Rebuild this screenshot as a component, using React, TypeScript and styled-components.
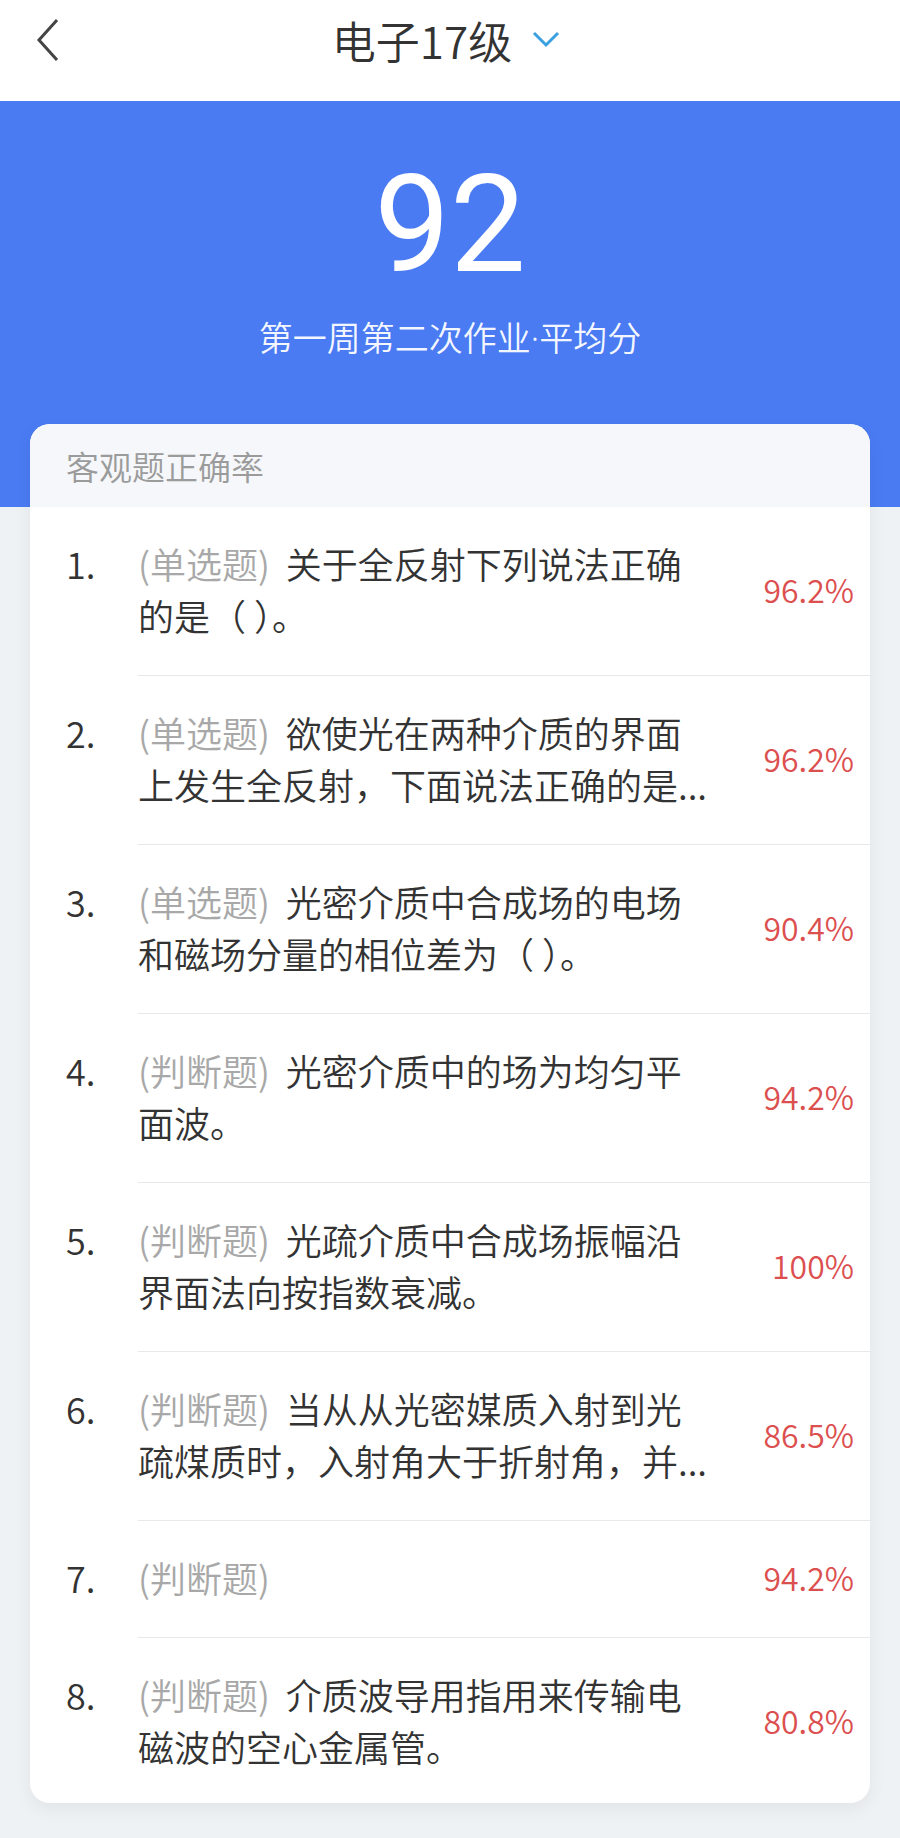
import React from 'react';
import styled, { createGlobalStyle } from 'styled-components';

const GlobalStyle = createGlobalStyle`
  html, body {
    margin: 0;
    padding: 0;
    background-color: #eef2f5;
    font-family: "Noto Sans CJK SC", "Noto Sans", sans-serif;
  }
  * {
    box-sizing: border-box;
  }
`;

interface Question {
  no: number;
  type: string;
  text: string;
  rate: string;
}

// 客观题列表
const questions: Question[] = [
  { no: 1, type: '单选题', text: '关于全反射下列说法正确的是（ ）。', rate: '96.2%' },
  { no: 2, type: '单选题', text: '欲使光在两种介质的界面上发生全反射，下面说法正确的是...', rate: '96.2%' },
  { no: 3, type: '单选题', text: '光密介质中合成场的电场和磁场分量的相位差为（ ）。', rate: '90.4%' },
  { no: 4, type: '判断题', text: '光密介质中的场为均匀平面波。', rate: '94.2%' },
  { no: 5, type: '判断题', text: '光疏介质中合成场振幅沿界面法向按指数衰减。', rate: '100%' },
  { no: 6, type: '判断题', text: '当从从光密媒质入射到光疏煤质时，入射角大于折射角，并...', rate: '86.5%' },
  { no: 7, type: '判断题', text: '', rate: '94.2%' },
  { no: 8, type: '判断题', text: '介质波导用指用来传输电磁波的空心金属管。', rate: '80.8%' },
];

const App = () => {
  return (
    <Page>
      <GlobalStyle />
      <TopBar>
        <BackButton aria-label="返回">
          <svg width="26" height="44" viewBox="0 0 26 44">
            <polyline points="22,2 4,22 22,42" fill="none" stroke="#444" strokeWidth="3" strokeLinejoin="miter" />
          </svg>
        </BackButton>
        <ClassPicker>
          <ClassName>电子17级</ClassName>
          <svg width="28" height="17" viewBox="0 0 28 17">
            <polyline points="2,2 14,14 26,2" fill="none" stroke="#3aa0e0" strokeWidth="3" />
          </svg>
        </ClassPicker>
        <span />
      </TopBar>

      <Hero>
        <Score>92</Score>
        <ScoreLabel>第一周第二次作业·平均分</ScoreLabel>
      </Hero>

      <Card>
        <CardHeader>客观题正确率</CardHeader>
        {questions.map(q => (
          <Row key={q.no}>
            <RowNo>{q.no}.</RowNo>
            <RowBody $last={q.no === questions.length}>
              <RowText>
                <TypeTag>({q.type})</TypeTag>
                {q.text}
              </RowText>
              <Rate>{q.rate}</Rate>
            </RowBody>
          </Row>
        ))}
      </Card>
    </Page>
  );
};

const Page = styled.div`
  min-height: 1838px;
  padding-bottom: 34px;
  font-weight: 350;
`;

const TopBar = styled.header`
  display: grid;
  grid-template-columns: 1fr auto 1fr;
  align-items: center;
  height: 101px;
  padding-bottom: 21px;
  background-color: #fff;
`;

const BackButton = styled.button`
  justify-self: start;
  display: flex;
  align-items: center;
  margin-left: 35px;
  padding: 0;
  border: none;
  background: none;
  cursor: pointer;
`;

const ClassPicker = styled.div`
  display: flex;
  align-items: center;
  gap: 20px;
  margin-right: 8px;

  svg {
    margin-top: -2px;
  }
`;

const ClassName = styled.span`
  font-size: 44px;
  line-height: 48px;
  color: #333;
`;

const Hero = styled.section`
  display: flex;
  flex-direction: column;
  align-items: center;
  height: 406px;
  padding-top: 57px;
  background-color: #4a7bf2;
  color: #fff;
`;

const Score = styled.div`
  font-family: Roboto, "Noto Sans", sans-serif;
  font-size: 135px;
  line-height: 135px;
  font-weight: 400;
`;

const ScoreLabel = styled.div`
  margin-top: 25px;
  font-family: "Noto Sans", "Noto Sans CJK SC", sans-serif;
  font-size: 34px;
  line-height: 40px;
  color: rgba(255, 255, 255, 0.94);
`;

const Card = styled.div`
  margin: -83px 30px 0;
  background-color: #fff;
  border-radius: 20px;
  overflow: hidden;
  box-shadow: 0 6px 18px rgba(0, 0, 0, 0.06);
`;

const CardHeader = styled.div`
  display: flex;
  align-items: center;
  height: 83px;
  padding-left: 36px;
  background-color: #f5f7fa;
  font-size: 33px;
  color: #9b9b9b;
`;

const Row = styled.div`
  display: flex;
  padding-left: 36px;
`;

const RowNo = styled.div`
  width: 72px;
  flex-shrink: 0;
  padding-top: 30px;
  font-size: 36px;
  line-height: 52px;
  color: #333;
`;

const RowBody = styled.div<{ $last: boolean }>`
  flex: 1;
  display: flex;
  align-items: center;
  justify-content: space-between;
  padding: 30px 16px ${props => (props.$last ? '31px' : '34px')} 0;
  border-bottom: ${props => (props.$last ? 'none' : '1px solid #e8e8e8')};
`;

const RowText = styled.div`
  width: 574px;
  font-size: 36px;
  line-height: 52px;
  color: #333;
`;

const TypeTag = styled.span`
  margin-right: 16px;
  color: #a8a8a8;
`;

const Rate = styled.div`
  font-size: 32px;
  color: #dc4f4f;
`;

export default App;
